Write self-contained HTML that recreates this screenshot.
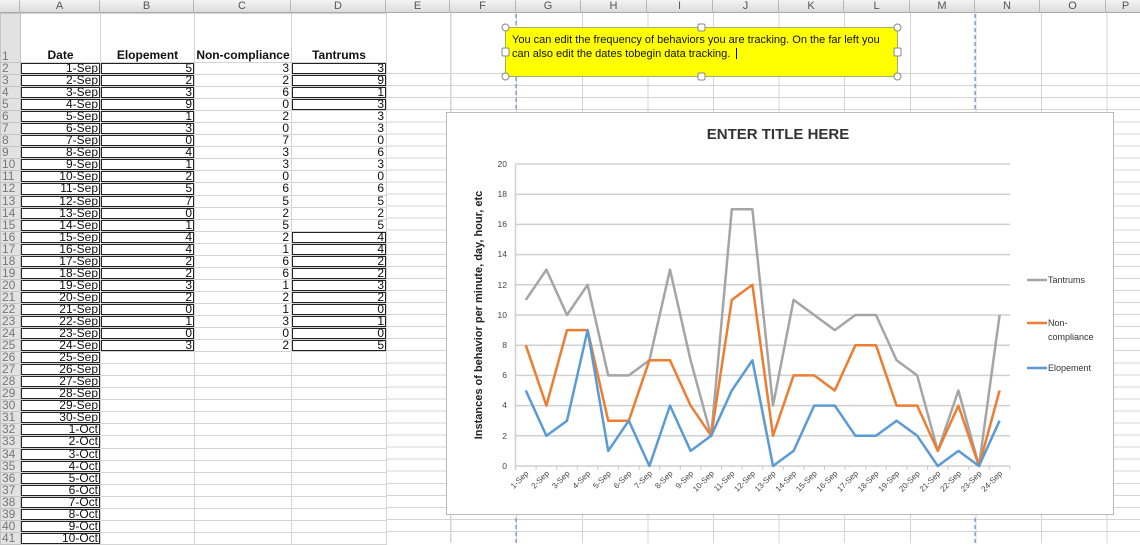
<!DOCTYPE html>
<html><head><meta charset="utf-8"><style>
*{margin:0;padding:0;box-sizing:border-box}
body{width:1140px;height:543px;overflow:hidden;background:#fff;font-family:"Liberation Sans",Arial,sans-serif;position:relative}
#hdr{position:absolute;left:0;top:0;width:1140px;height:13px;background:linear-gradient(#f4f4f4,#dcdcdc);border-bottom:1px solid #aaa}
#hdr span{position:absolute;top:0;height:13px;line-height:13px;font-size:11px;color:#555;text-align:center;border-right:1px solid #b8b8b8}
#grid{position:absolute;left:386px;top:13px;width:754px;height:530px;
background-image:linear-gradient(90deg,transparent 64px,#d4d4d4 64px,#d4d4d4 65px,transparent 65px),
repeating-linear-gradient(90deg,transparent 0,transparent 64.6px,#d4d4d4 64.6px,#d4d4d4 65.6px);}
#rows{position:absolute;left:386px;top:62px;width:754px;height:481px;background:repeating-linear-gradient(180deg,transparent 0,transparent 11.05px,#d4d4d4 11.05px,#d4d4d4 12.05px)}
table{position:absolute;left:0;top:13px;width:386px;border-collapse:collapse;table-layout:fixed;font-size:12px}
td,th{border:1px solid #d4d4d4;height:12.05px;padding:0 2px;line-height:11px;overflow:hidden;white-space:nowrap}
th{background:#e2e2e2;color:#777;font-weight:normal;text-align:left;font-size:12px;padding-left:1px;border-color:#c4c4c4}
td{text-align:right;color:#111}
tr.h td{height:49px;vertical-align:bottom;text-align:center;font-weight:bold;font-size:12px;padding:0 0 1px 0;overflow:visible}
tr.h th{vertical-align:bottom}
.k{box-shadow:inset 0 0 0 1px #222}
</style></head><body>
<div id="hdr">
<span style="left:0;width:20px"></span>
<span style="left:20px;width:80px">A</span>
<span style="left:100px;width:94px">B</span>
<span style="left:194px;width:97px">C</span>
<span style="left:291px;width:95px">D</span>
<span style="left:386px;width:64px">E</span>
<span style="left:450px;width:66px">F</span>
<span style="left:516px;width:65px">G</span>
<span style="left:581px;width:66px">H</span>
<span style="left:647px;width:66px">I</span>
<span style="left:713px;width:66px">J</span>
<span style="left:779px;width:65px">K</span>
<span style="left:844px;width:66px">L</span>
<span style="left:910px;width:65px">M</span>
<span style="left:975px;width:65px">N</span>
<span style="left:1040px;width:66px">O</span>
<span style="left:1106px;width:40px">P</span>
</div>
<div id="grid"></div>
<div id="rows"></div>
<table>
<colgroup><col style="width:20px"><col style="width:80px"><col style="width:94px"><col style="width:97px"><col style="width:95px"></colgroup>
<tr class="h"><th>1</th><td>Date</td><td>Elopement</td><td>Non-compliance</td><td>Tantrums</td></tr>
<tr><th>2</th><td class="k">1-Sep</td><td class="k">5</td><td>3</td><td class="k">3</td></tr>
<tr><th>3</th><td class="k">2-Sep</td><td class="k">2</td><td>2</td><td class="k">9</td></tr>
<tr><th>4</th><td class="k">3-Sep</td><td class="k">3</td><td>6</td><td class="k">1</td></tr>
<tr><th>5</th><td class="k">4-Sep</td><td class="k">9</td><td>0</td><td class="k">3</td></tr>
<tr><th>6</th><td class="k">5-Sep</td><td class="k">1</td><td>2</td><td>3</td></tr>
<tr><th>7</th><td class="k">6-Sep</td><td class="k">3</td><td>0</td><td>3</td></tr>
<tr><th>8</th><td class="k">7-Sep</td><td class="k">0</td><td>7</td><td>0</td></tr>
<tr><th>9</th><td class="k">8-Sep</td><td class="k">4</td><td>3</td><td>6</td></tr>
<tr><th>10</th><td class="k">9-Sep</td><td class="k">1</td><td>3</td><td>3</td></tr>
<tr><th>11</th><td class="k">10-Sep</td><td class="k">2</td><td>0</td><td>0</td></tr>
<tr><th>12</th><td class="k">11-Sep</td><td class="k">5</td><td>6</td><td>6</td></tr>
<tr><th>13</th><td class="k">12-Sep</td><td class="k">7</td><td>5</td><td>5</td></tr>
<tr><th>14</th><td class="k">13-Sep</td><td class="k">0</td><td>2</td><td>2</td></tr>
<tr><th>15</th><td class="k">14-Sep</td><td class="k">1</td><td>5</td><td>5</td></tr>
<tr><th>16</th><td class="k">15-Sep</td><td class="k">4</td><td>2</td><td class="k">4</td></tr>
<tr><th>17</th><td class="k">16-Sep</td><td class="k">4</td><td>1</td><td class="k">4</td></tr>
<tr><th>18</th><td class="k">17-Sep</td><td class="k">2</td><td>6</td><td class="k">2</td></tr>
<tr><th>19</th><td class="k">18-Sep</td><td class="k">2</td><td>6</td><td class="k">2</td></tr>
<tr><th>20</th><td class="k">19-Sep</td><td class="k">3</td><td>1</td><td class="k">3</td></tr>
<tr><th>21</th><td class="k">20-Sep</td><td class="k">2</td><td>2</td><td class="k">2</td></tr>
<tr><th>22</th><td class="k">21-Sep</td><td class="k">0</td><td>1</td><td class="k">0</td></tr>
<tr><th>23</th><td class="k">22-Sep</td><td class="k">1</td><td>3</td><td class="k">1</td></tr>
<tr><th>24</th><td class="k">23-Sep</td><td class="k">0</td><td>0</td><td class="k">0</td></tr>
<tr><th>25</th><td class="k">24-Sep</td><td class="k">3</td><td>2</td><td class="k">5</td></tr>
<tr><th>26</th><td class="k">25-Sep</td><td></td><td></td><td></td></tr>
<tr><th>27</th><td class="k">26-Sep</td><td></td><td></td><td></td></tr>
<tr><th>28</th><td class="k">27-Sep</td><td></td><td></td><td></td></tr>
<tr><th>29</th><td class="k">28-Sep</td><td></td><td></td><td></td></tr>
<tr><th>30</th><td class="k">29-Sep</td><td></td><td></td><td></td></tr>
<tr><th>31</th><td class="k">30-Sep</td><td></td><td></td><td></td></tr>
<tr><th>32</th><td class="k">1-Oct</td><td></td><td></td><td></td></tr>
<tr><th>33</th><td class="k">2-Oct</td><td></td><td></td><td></td></tr>
<tr><th>34</th><td class="k">3-Oct</td><td></td><td></td><td></td></tr>
<tr><th>35</th><td class="k">4-Oct</td><td></td><td></td><td></td></tr>
<tr><th>36</th><td class="k">5-Oct</td><td></td><td></td><td></td></tr>
<tr><th>37</th><td class="k">6-Oct</td><td></td><td></td><td></td></tr>
<tr><th>38</th><td class="k">7-Oct</td><td></td><td></td><td></td></tr>
<tr><th>39</th><td class="k">8-Oct</td><td></td><td></td><td></td></tr>
<tr><th>40</th><td class="k">9-Oct</td><td></td><td></td><td></td></tr>
<tr><th>41</th><td class="k">10-Oct</td><td></td><td></td><td></td></tr>
</table>
<svg width="1140" height="543" style="position:absolute;left:0;top:0" font-family="Liberation Sans, sans-serif">
<line x1="516" y1="14" x2="516" y2="543" stroke="#4a7fd4" stroke-dasharray="4,3"/>
<line x1="975" y1="14" x2="975" y2="543" stroke="#4a7fd4" stroke-dasharray="4,3"/>
<rect x="446.5" y="112.5" width="667" height="402" fill="#fff" stroke="#bbb"/>
<text x="778" y="139" text-anchor="middle" font-size="15" font-weight="bold" fill="#333">ENTER TITLE HERE</text>
<g stroke="#d0d0d0" stroke-width="1.5">
<line x1="515" x2="1010" y1="164" y2="164"/><line x1="515" x2="1010" y1="194.2" y2="194.2"/><line x1="515" x2="1010" y1="224.4" y2="224.4"/><line x1="515" x2="1010" y1="254.6" y2="254.6"/><line x1="515" x2="1010" y1="284.8" y2="284.8"/><line x1="515" x2="1010" y1="315" y2="315"/><line x1="515" x2="1010" y1="345.2" y2="345.2"/><line x1="515" x2="1010" y1="375.4" y2="375.4"/><line x1="515" x2="1010" y1="405.6" y2="405.6"/><line x1="515" x2="1010" y1="435.8" y2="435.8"/><line x1="515" x2="1010" y1="466" y2="466"/>
<line x1="515.5" x2="515.5" y1="164" y2="470"/>
</g>
<g stroke="#ccc" stroke-width="1">
<path d="M515.5 466v4M536.1 466v4M556.7 466v4M577.3 466v4M597.9 466v4M618.5 466v4M639.1 466v4M659.7 466v4M680.3 466v4M700.9 466v4M721.5 466v4M742.1 466v4M762.7 466v4M783.3 466v4M803.9 466v4M824.5 466v4M845.1 466v4M865.7 466v4M886.3 466v4M906.9 466v4M927.5 466v4M948.1 466v4M968.7 466v4M989.3 466v4M1009.9 466v4"/>
</g>
<g font-size="8.5" fill="#444" text-anchor="end">
<text x="507" y="167">20</text><text x="507" y="197">18</text><text x="507" y="227">16</text><text x="507" y="257">14</text><text x="507" y="288">12</text><text x="507" y="318">10</text><text x="507" y="348">8</text><text x="507" y="378">6</text><text x="507" y="408">4</text><text x="507" y="439">2</text><text x="507" y="469">0</text>
</g>
<text transform="translate(482,315) rotate(-90)" text-anchor="middle" font-size="11" font-weight="bold" fill="#222">Instances of behavior per minute, day, hour, etc</text>
<g font-size="8" fill="#444" text-anchor="end">
<text transform="translate(529,474) rotate(-45)">1-Sep</text>
<text transform="translate(549.6,474) rotate(-45)">2-Sep</text>
<text transform="translate(570.2,474) rotate(-45)">3-Sep</text>
<text transform="translate(590.8,474) rotate(-45)">4-Sep</text>
<text transform="translate(611.4,474) rotate(-45)">5-Sep</text>
<text transform="translate(632,474) rotate(-45)">6-Sep</text>
<text transform="translate(652.6,474) rotate(-45)">7-Sep</text>
<text transform="translate(673.2,474) rotate(-45)">8-Sep</text>
<text transform="translate(693.8,474) rotate(-45)">9-Sep</text>
<text transform="translate(714.4,474) rotate(-45)">10-Sep</text>
<text transform="translate(735,474) rotate(-45)">11-Sep</text>
<text transform="translate(755.6,474) rotate(-45)">12-Sep</text>
<text transform="translate(776.2,474) rotate(-45)">13-Sep</text>
<text transform="translate(796.8,474) rotate(-45)">14-Sep</text>
<text transform="translate(817.4,474) rotate(-45)">15-Sep</text>
<text transform="translate(838,474) rotate(-45)">16-Sep</text>
<text transform="translate(858.6,474) rotate(-45)">17-Sep</text>
<text transform="translate(879.2,474) rotate(-45)">18-Sep</text>
<text transform="translate(899.8,474) rotate(-45)">19-Sep</text>
<text transform="translate(920.4,474) rotate(-45)">20-Sep</text>
<text transform="translate(941,474) rotate(-45)">21-Sep</text>
<text transform="translate(961.6,474) rotate(-45)">22-Sep</text>
<text transform="translate(982.2,474) rotate(-45)">23-Sep</text>
<text transform="translate(1002.8,474) rotate(-45)">24-Sep</text>
</g>
<g fill="none" stroke-width="2.5" stroke-linejoin="round">
<polyline stroke="#a5a5a5" points="525.8,299.9 546.4,269.7 567,315 587.6,284.8 608.2,375.4 628.8,375.4 649.4,360.3 670,269.7 690.6,360.3 711.2,435.8 731.8,209.3 752.4,209.3 773,405.6 793.6,299.9 814.2,315 834.8,330.1 855.4,315 876,315 896.6,360.3 917.2,375.4 937.8,450.9 958.4,390.5 979,466 999.6,315"/>
<polyline stroke="#ed7d31" points="525.8,345.2 546.4,405.6 567,330.1 587.6,330.1 608.2,420.7 628.8,420.7 649.4,360.3 670,360.3 690.6,405.6 711.2,435.8 731.8,299.9 752.4,284.8 773,435.8 793.6,375.4 814.2,375.4 834.8,390.5 855.4,345.2 876,345.2 896.6,405.6 917.2,405.6 937.8,450.9 958.4,405.6 979,466 999.6,390.5"/>
<polyline stroke="#5b9bd5" points="525.8,390.5 546.4,435.8 567,420.7 587.6,330.1 608.2,450.9 628.8,420.7 649.4,466 670,405.6 690.6,450.9 711.2,435.8 731.8,390.5 752.4,360.3 773,466 793.6,450.9 814.2,405.6 834.8,405.6 855.4,435.8 876,435.8 896.6,420.7 917.2,435.8 937.8,466 958.4,450.9 979,466 999.6,420.7"/>
<line x1="1027" x2="1047" y1="280" y2="280" stroke="#a5a5a5"/>
<line x1="1027" x2="1047" y1="323" y2="323" stroke="#ed7d31"/>
<line x1="1027" x2="1047" y1="368" y2="368" stroke="#5b9bd5"/>
</g>
<g font-size="9" fill="#333">
<text x="1048" y="283">Tantrums</text>
<text x="1048" y="326">Non-</text>
<text x="1048" y="340">compliance</text>
<text x="1048" y="371">Elopement</text>
</g>
<rect x="505.5" y="27.5" width="392" height="49" fill="#ffff00" stroke="#9fb06a"/>
<text font-size="11" fill="#111"><tspan x="512" y="43">You can edit the frequency of behaviors you are tracking. On the far left you</tspan><tspan x="512" y="57">can also edit the dates tobegin data tracking.</tspan></text>
<line x1="736.5" y1="48" x2="736.5" y2="59" stroke="#000"/>
<g fill="#fff" stroke="#888">
<circle cx="505.5" cy="27.5" r="3.5"/><circle cx="897.5" cy="27.5" r="3.5"/><circle cx="505.5" cy="76.5" r="3.5"/><circle cx="897.5" cy="76.5" r="3.5"/>
<rect x="698" y="24" width="7" height="7" rx="1.5"/><rect x="698" y="73" width="7" height="7" rx="1.5"/>
<rect x="502" y="48" width="7" height="8" rx="1.5"/><rect x="894" y="48" width="7" height="8" rx="1.5"/>
</g>
</svg>
</body></html>
